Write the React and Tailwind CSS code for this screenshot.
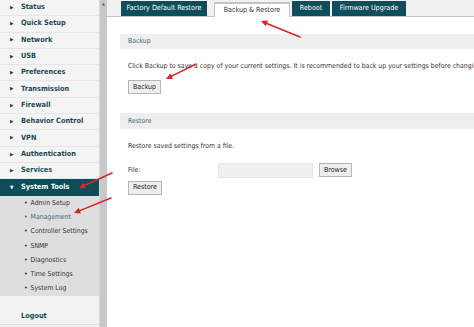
import React from "react";

const menu = [
  "Status",
  "Quick Setup",
  "Network",
  "USB",
  "Preferences",
  "Transmission",
  "Firewall",
  "Behavior Control",
  "VPN",
  "Authentication",
  "Services",
];

const subMenu = [
  "Admin Setup",
  "Management",
  "Controller Settings",
  "SNMP",
  "Diagnostics",
  "Time Settings",
  "System Log",
];

const font = { fontFamily: '"DejaVu Sans Condensed", "DejaVu Sans", sans-serif' };

function Arrow({ x1, y1, x2, y2 }) {
  const a = Math.atan2(y2 - y1, x2 - x1);
  const len = 7;
  const w = 0.45;
  const p1 = [x2 - len * Math.cos(a - w), y2 - len * Math.sin(a - w)];
  const p2 = [x2 - len * Math.cos(a + w), y2 - len * Math.sin(a + w)];
  return (
    <g>
      <line x1={x1} y1={y1} x2={x2 - 3 * Math.cos(a)} y2={y2 - 3 * Math.sin(a)} stroke="#d9262b" strokeWidth="1.6" strokeLinecap="round" />
      <polygon points={`${x2},${y2} ${p1[0]},${p1[1]} ${p2[0]},${p2[1]}`} fill="#d9262b" />
    </g>
  );
}

function Tab({ label, active, width }) {
  return (
    <div
      className={
        active
          ? "h-[15px] flex items-center justify-center bg-white border-t-2 border-x border-[#c4c4c4] text-[#333] -mb-px"
          : "h-[15px] flex items-center justify-center bg-[#0e4e5b] text-white"
      }
      style={{ width }}
    >
      {label}
    </div>
  );
}

function Btn({ children }) {
  return (
    <div className="h-[14px] px-[4px] flex items-center border border-[#b5b5b5] bg-[#eeeeee] text-[#222] text-[7px]">
      {children}
    </div>
  );
}

export default function App() {
  return (
    <div className="relative w-[474px] h-[327px] overflow-hidden bg-white flex" style={font}>
      {/* SIDEBAR */}
      <div className="w-[100px] shrink-0 h-full flex flex-col bg-[#f4f4f4] border-r border-[#d8d8d8]">
        {menu.map((m) => (
          <div key={m} className="h-[16.3px] shrink-0 flex items-center whitespace-nowrap border-b border-[#e6e6e6] text-[7.3px] font-bold text-[#1d4a56]">
            <span className="w-[21px] pl-[10px] text-[5px] text-[#2a3c40]">▶</span>
            {m}
          </div>
        ))}
        <div className="h-[16.3px] shrink-0 flex items-center bg-[#0b4e5a] text-[7.3px] font-bold text-white">
          <span className="w-[21px] pl-[10px] text-[5px]">▼</span>
          System Tools
        </div>
        <div className="bg-[#dedede] shrink-0">
          {subMenu.map((s) => (
            <div
              key={s}
              className={
                "h-[14.3px] flex items-center whitespace-nowrap pl-[24px] text-[6.8px] " +
                (s === "Management" ? "text-[#3a6e7e]" : "text-[#333]")
              }
            >
              <span className="mr-[3px]">•</span>
              {s}
            </div>
          ))}
        </div>
        <div className="flex-1 flex flex-col justify-end bg-[#f2f2f2]">
          <div className="h-[17px] mb-[2px] flex items-center pl-[21px] border-b border-[#e0e0e0] text-[7.3px] font-bold text-[#1d4a56]">
            Logout
          </div>
        </div>
      </div>

      {/* SCROLLBAR */}
      <div className="w-[7px] shrink-0 h-full bg-[#c8c8c8] flex flex-col items-center">
        <span className="text-[4px] text-[#555] leading-[6px] mt-[1px]">▲</span>
      </div>

      {/* MAIN */}
      <div className="flex-1 min-w-0 overflow-hidden h-full flex flex-col text-[6.9px] text-[#333]">
        <div className="h-[17px] shrink-0 bg-[#f1f1f1] border-b border-[#c4c4c4] flex items-end pl-[14px] text-[7.1px]">
          <div className="flex items-end gap-[2px] whitespace-nowrap">
            <Tab label="Factory Default Restore" width={86} />
            <div className="w-[3px]" />
            <Tab label="Backup & Restore" active width={76} />
            <Tab label="Reboot" width={38} />
            <Tab label="Firmware Upgrade" width={74} />
          </div>
        </div>

        <div className="pl-[13px] pt-[17px]">
          <div className="h-[15px] bg-[#eeeeee] flex items-center pl-[8px] text-[#41697a]">Backup</div>
          <div className="pl-[8px] pt-[12px] whitespace-nowrap">
            Click Backup to save a copy of your current settings. It is recommended to back up your settings before changing
          </div>
          <div className="pl-[8px] pt-[9px] flex">
            <Btn>Backup</Btn>
          </div>

          <div className="mt-[19px] h-[16px] bg-[#eeeeee] flex items-center pl-[8px] text-[#41697a]">Restore</div>
          <div className="pl-[8px] pt-[12px]">Restore saved settings from a file.</div>
          <div className="pl-[8px] pt-[11px] flex items-center">
            <span className="w-[90px]">File:</span>
            <div className="w-[95px] h-[15px] bg-[#f0f0f0] border border-[#e6e6e6]" />
            <div className="ml-[6px]">
              <Btn>Browse</Btn>
            </div>
          </div>
          <div className="pl-[8px] pt-[3px] flex">
            <Btn>Restore</Btn>
          </div>
        </div>
      </div>

      {/* ANNOTATIONS */}
      <svg className="absolute inset-0 pointer-events-none" width="474" height="327">
        <Arrow x1={300} y1={37} x2={261} y2={21} />
        <Arrow x1={196} y1={64} x2={166} y2={79} />
        <Arrow x1={112} y1={173} x2={79} y2={188} />
        <Arrow x1={111} y1={198} x2={74} y2={213} />
      </svg>
    </div>
  );
}
